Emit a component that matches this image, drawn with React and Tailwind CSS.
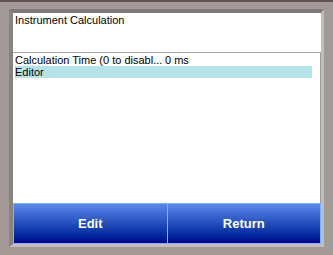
export default function App() {
  return (
    <div className="w-[333px] h-[255px] bg-[#a39a98] border-t-2 border-[#5f5757] pt-[7px] px-[9px] font-['Liberation_Sans',Arial,sans-serif]">
      <div className="w-[315px] h-[238px] border-t-4 border-l-4 border-r-[3px] border-b-[3px] border-t-[#81787a] border-l-[#8a8281] border-r-[#c3bcbb] border-b-[#c3bcbb] flex flex-col">
        <div className="h-[40px] bg-white border-b border-[#a8a8a8] px-[2px] pt-[1px] text-[11px] leading-[13px] text-black">
          Instrument Calculation
        </div>
        <div className="h-[150px] bg-white border-r border-[#9c9c9c] pl-[2px] pr-[8px] pt-[1px] text-[11px] leading-[12px] text-black">
          <div className="flex h-[12px]">
            <span className="w-[150px] whitespace-nowrap overflow-hidden">Calculation Time (0 to disabl...</span>
            <span>0 ms</span>
          </div>
          <div className="h-[12px] bg-[#b6e3e8]">Editor</div>
        </div>
        <div className="flex-1 flex">
          <button className="flex-1 border border-[#78b4f0] bg-gradient-to-b from-[#5c86ea] to-[#00008c] text-white font-bold text-[13px]">
            Edit
          </button>
          <button className="flex-1 border border-l-0 border-[#78b4f0] bg-gradient-to-b from-[#5c86ea] to-[#00008c] text-white font-bold text-[13px]">
            Return
          </button>
        </div>
      </div>
    </div>
  );
}
